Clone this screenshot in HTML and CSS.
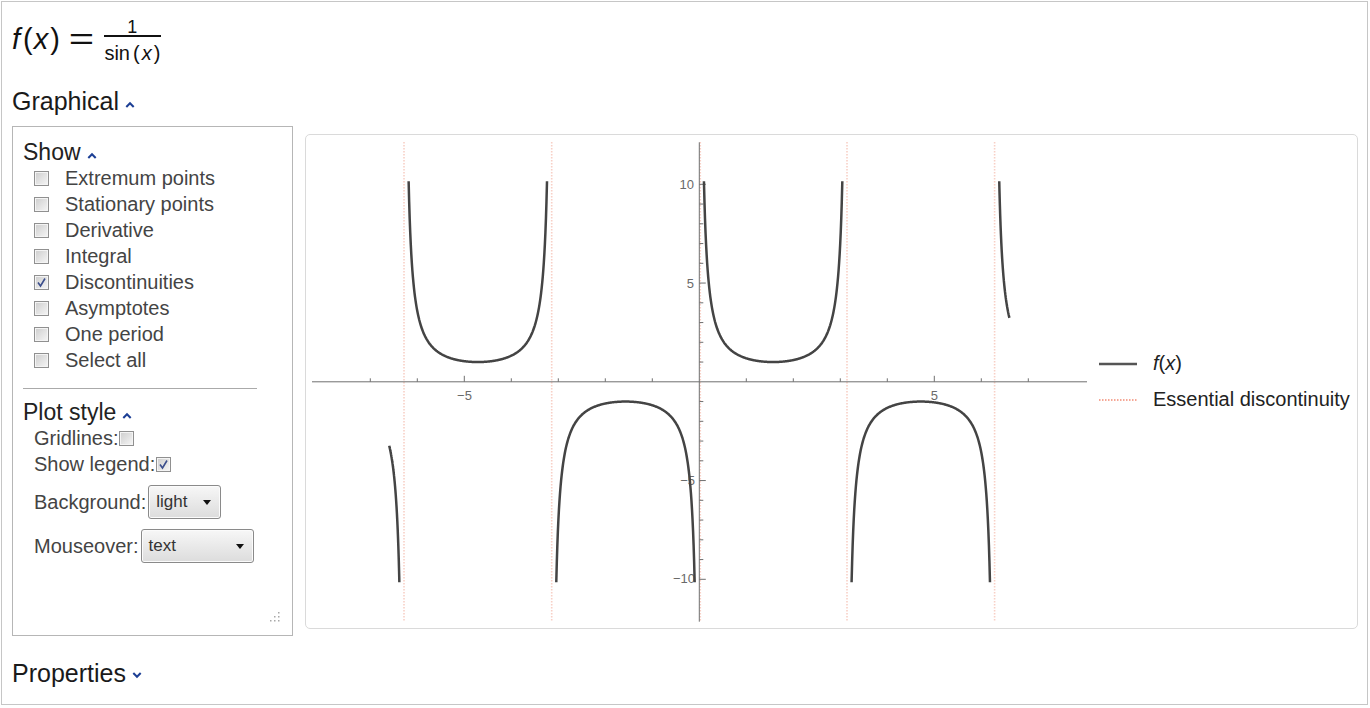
FILE: index.html
```html
<!DOCTYPE html>
<html>
<head>
<meta charset="utf-8">
<title>f(x) = 1/sin(x)</title>
<link rel="stylesheet" href="styles.css">
</head>
<body>
<div class="page">
  <div class="formula">
    <span class="lhs"><i class="fi">f</i><span class="pl">(</span><i class="xi">x</i><span class="pr">)</span><span class="eq">=</span></span>
    <span class="frac">
      <span class="num">1</span>
      <span class="bar"></span>
      <span class="den">sin<span class="dpl">(</span><i class="dx">x</i><span class="dpr">)</span></span>
    </span>
  </div>

  <h2 class="section">Graphical<svg class="caret" viewBox="0 0 10 7"><polyline points="1.3,6 5,2.2 8.7,6"/></svg></h2>

  <div class="main">
    <div class="panel">
      <h3 class="sub">Show<svg class="caret sm" viewBox="0 0 10 7"><polyline points="1.3,6 5,2.2 8.7,6"/></svg></h3>
      <ul class="checks">
        <li><span class="cb"></span>Extremum points</li>
        <li><span class="cb"></span>Stationary points</li>
        <li><span class="cb"></span>Derivative</li>
        <li><span class="cb"></span>Integral</li>
        <li><span class="cb on"><svg viewBox="0 0 13 13"><polyline points="3,6.5 5.5,10 10,2.5"/></svg></span>Discontinuities</li>
        <li><span class="cb"></span>Asymptotes</li>
        <li><span class="cb"></span>One period</li>
        <li><span class="cb"></span>Select all</li>
      </ul>
      <hr class="sep">
      <h3 class="sub style-head">Plot style<svg class="caret sm" viewBox="0 0 10 7"><polyline points="1.3,6 5,2.2 8.7,6"/></svg></h3>
      <div class="opt"><span>Gridlines:</span><span class="cb tight"></span></div>
      <div class="opt"><span>Show legend:</span><span class="cb tight on"><svg viewBox="0 0 13 13"><polyline points="3,6.5 5.5,10 10,2.5"/></svg></span></div>
      <div class="opt sel-row first"><span>Background:</span><div class="select w1"><span>light</span><span class="arrow"></span></div></div>
      <div class="opt sel-row"><span>Mouseover:</span><div class="select w2"><span>text</span><span class="arrow"></span></div></div>
      <svg class="grip" viewBox="0 0 11 11">
        <rect x="9" y="1" width="1.5" height="1.5"/>
        <rect x="9" y="5" width="1.5" height="1.5"/>
        <rect x="5" y="5" width="1.5" height="1.5"/>
        <rect x="9" y="9" width="1.5" height="1.5"/>
        <rect x="5" y="9" width="1.5" height="1.5"/>
        <rect x="1" y="9" width="1.5" height="1.5"/>
      </svg>
    </div>

    <div class="plot">
      <svg class="chart" width="790" height="493" viewBox="306 135 790 493">
        <line class="disc" x1="404" y1="142" x2="404" y2="622"/>
        <line class="disc" x1="551.7" y1="142" x2="551.7" y2="622"/>
        <line class="disc" x1="700.3" y1="142" x2="700.3" y2="622"/>
        <line class="disc" x1="847" y1="142" x2="847" y2="622"/>
        <line class="disc" x1="994.6" y1="142" x2="994.6" y2="622"/>
        <line class="axis" x1="312" y1="381.8" x2="1087" y2="381.8"/>
        <line class="axis" x1="699.3" y1="142.3" x2="699.3" y2="621.7"/>
        <path id="ticks" class="axis" d=""/>
        <text class="tl" x="694" y="188.8" text-anchor="end">10</text>
        <text class="tl" x="694" y="287.8" text-anchor="end">5</text>
        <text class="tl" x="695" y="484.5" text-anchor="end">−5</text>
        <text class="tl" x="695" y="582.5" text-anchor="end">−10</text>
        <text class="tl" x="464.5" y="399.6" text-anchor="middle">−5</text>
        <text class="tl" x="934.3" y="399.6" text-anchor="middle">5</text>
        <path id="curve" class="curve" d=""/>
      </svg>
      <div class="legend">
        <div class="lrow"><svg class="sample" viewBox="0 0 38 6"><line class="lcurve" x1="0" y1="3" x2="38" y2="3"/></svg><span><i>f</i>(<i>x</i>)</span></div>
        <div class="lrow"><svg class="sample" viewBox="0 0 38 6"><line class="ldisc" x1="0" y1="3" x2="38" y2="3"/></svg><span>Essential discontinuity</span></div>
      </div>
    </div>
  </div>

  <h2 class="section props">Properties<svg class="caret down" viewBox="0 0 10 7"><polyline points="1.3,1 5,4.8 8.7,1"/></svg></h2>
</div>
<script src="script.js"></script>
</body>
</html>
```

FILE: styles.css
```css
html, body {
  margin: 0;
  padding: 0;
  background: #fff;
}
body {
  font-family: "Liberation Sans", Arial, sans-serif;
  color: #222;
}
.page {
  box-sizing: border-box;
  width: 1367px;
  height: 704px;
  margin: 1px 0 0 1px;
  border: 1px solid #c6c6c6;
  padding: 11px 0 0 10px;
}

/* formula */
.formula {
  display: flex;
  align-items: flex-start;
  height: 56px;
  color: #111;
}
.lhs {
  font-size: 29px;
  line-height: 34px;
  white-space: nowrap;
  margin-top: 9px;
}
.lhs i { font-style: italic; }
.fi { margin-right: 3px; }
.pl { margin-right: 1px; }
.xi { margin-right: 2px; }
.eq {
  display: inline-block;
  transform: scaleX(1.5);
  margin: 0 0 0 13px;
}
.frac {
  display: inline-flex;
  flex-direction: column;
  align-items: center;
  margin: 6px 0 0 14px;
}
.num {
  font-size: 18px;
  line-height: 16px;
}
.bar {
  width: 57px;
  height: 2px;
  background: #111;
}
.den {
  font-size: 20px;
  line-height: 32px;
  white-space: nowrap;
}
.dpl { margin-left: 3px; margin-right: 2px; }
.dx { margin-right: 2px; }

/* headings */
.section {
  font-size: 25px;
  font-weight: normal;
  line-height: 28px;
  margin: 18px 0 0;
  color: #1a1a1a;
}
.props { margin-top: 23px; }
.caret {
  width: 10px;
  height: 7px;
  margin-left: 6px;
  vertical-align: 2px;
  fill: none;
  stroke: #1c3f95;
  stroke-width: 2;
}
.caret.sm { margin-left: 6px; vertical-align: 1px; }
.caret.down { vertical-align: 3px; }

.main {
  display: flex;
  gap: 12px;
  margin-top: 11px;
}

/* left panel */
.panel {
  box-sizing: border-box;
  width: 281px;
  height: 510px;
  border: 1px solid #b6b6b6;
  padding: 12px 0 0 10px;
  position: relative;
}
.sub {
  font-size: 23px;
  font-weight: normal;
  line-height: 26px;
  margin: 0;
  color: #222;
}
.style-head { margin-top: 10px; }
.checks {
  list-style: none;
  margin: 0;
  padding: 0 0 0 11px;
}
.checks li {
  display: flex;
  align-items: center;
  height: 26px;
  font-size: 20px;
  color: #444;
}
.cb {
  box-sizing: border-box;
  flex: none;
  width: 15px;
  height: 15px;
  border: 1px solid #909090;
  box-shadow: inset 0 0 0 1px #f4f4f4;
  background: linear-gradient(135deg, #cdcdcd, #f6f6f6);
  display: flex;
  align-items: center;
  justify-content: center;
}
.checks .cb { margin-right: 16px; }
.cb.tight { margin-left: 1px; }
.cb svg {
  width: 13px;
  height: 13px;
  fill: none;
  stroke: #3b4e8c;
  stroke-width: 1.6;
}
.sep {
  border: 0;
  border-top: 1px solid #aaa;
  height: 0;
  width: 234px;
  margin: 15px 0 0;
}
.opt {
  display: flex;
  align-items: center;
  height: 26px;
  padding-left: 11px;
  font-size: 20px;
  color: #444;
}
.sel-row {
  height: 34px;
  margin-top: 10px;
}
.sel-row.first { margin-top: 8px; }
.select {
  box-sizing: border-box;
  height: 34px;
  margin-left: 2px;
  border: 1px solid #8a8a8a;
  border-radius: 3px;
  box-shadow: inset 0 0 0 1px #fbfbfb;
  background: linear-gradient(#f7f7f7, #dcdcdc);
  display: flex;
  align-items: center;
  justify-content: space-between;
  padding: 0 9px 0 7px;
  font-size: 17px;
  color: #333;
}
.w1 { width: 73px; }
.w2 { width: 113px; }
.arrow {
  width: 0;
  height: 0;
  border-left: 4px solid transparent;
  border-right: 4px solid transparent;
  border-top: 5px solid #111;
}
.grip {
  position: absolute;
  right: 12px;
  bottom: 13px;
  width: 11px;
  height: 11px;
  fill: #a8a8a8;
}

/* plot */
.plot {
  box-sizing: border-box;
  width: 1053px;
  height: 495px;
  margin-top: 8px;
  border: 1px solid #dadada;
  border-radius: 5px;
  display: flex;
  align-items: center;
}
.chart {
  flex: none;
  display: block;
}
.disc {
  stroke: #f8d0c6;
  stroke-width: 1.6;
  stroke-dasharray: 1.5 1.5;
}
.axis {
  stroke: #707070;
  stroke-width: 1;
  fill: none;
}
.curve {
  fill: none;
  stroke: #444;
  stroke-width: 2.5;
}
.tl {
  font-family: "Liberation Sans", Arial, sans-serif;
  font-size: 13px;
  fill: #6a6a6a;
}
.legend {
  margin-left: 3px;
}
.lrow {
  display: flex;
  align-items: center;
  height: 36px;
  font-size: 20px;
  color: #222;
  white-space: nowrap;
}
.sample {
  width: 38px;
  height: 6px;
  margin-right: 16px;
  flex: none;
}
.lcurve {
  stroke: #555;
  stroke-width: 2.4;
}
.ldisc {
  stroke: #f28a74;
  stroke-width: 1.6;
  stroke-dasharray: 1.5 1.5;
}
```

FILE: script.js
```js
(function () {
  var X0 = 699.3, SX = 47, Y0 = 381.8, SY = 19.75, C = 10.15;
  var P = Math.PI, d = Math.asin(1 / C);
  var ranges = [
    [-2.1 * P, -2 * P - d], [-2 * P + d, -P - d], [-P + d, -d],
    [d, P - d], [P + d, 2 * P - d], [2 * P + d, 2.1 * P]
  ];
  var s = '';
  ranges.forEach(function (r) {
    var n = 260;
    for (var i = 0; i <= n; i++) {
      var x = r[0] + (r[1] - r[0]) * i / n;
      var y = 1 / Math.sin(x);
      s += (i ? 'L' : 'M') + (X0 + SX * x).toFixed(2) + ' ' + (Y0 - SY * y).toFixed(2);
    }
  });
  document.getElementById('curve').setAttribute('d', s);

  var t = '';
  var k;
  for (k = -7; k <= 7; k++) {
    if (!k) continue;
    var px = X0 + SX * k;
    var h = (k % 5 === 0) ? 6 : 3.5;
    t += 'M' + px.toFixed(2) + ' ' + Y0 + 'V' + (Y0 - h).toFixed(2);
  }
  for (k = -10; k <= 10; k++) {
    if (!k) continue;
    var py = Y0 - SY * k;
    var w = (k % 5 === 0) ? 6.5 : 4;
    t += 'M' + X0 + ' ' + py.toFixed(2) + 'H' + (X0 + w).toFixed(2);
  }
  document.getElementById('ticks').setAttribute('d', t);
})();
```
